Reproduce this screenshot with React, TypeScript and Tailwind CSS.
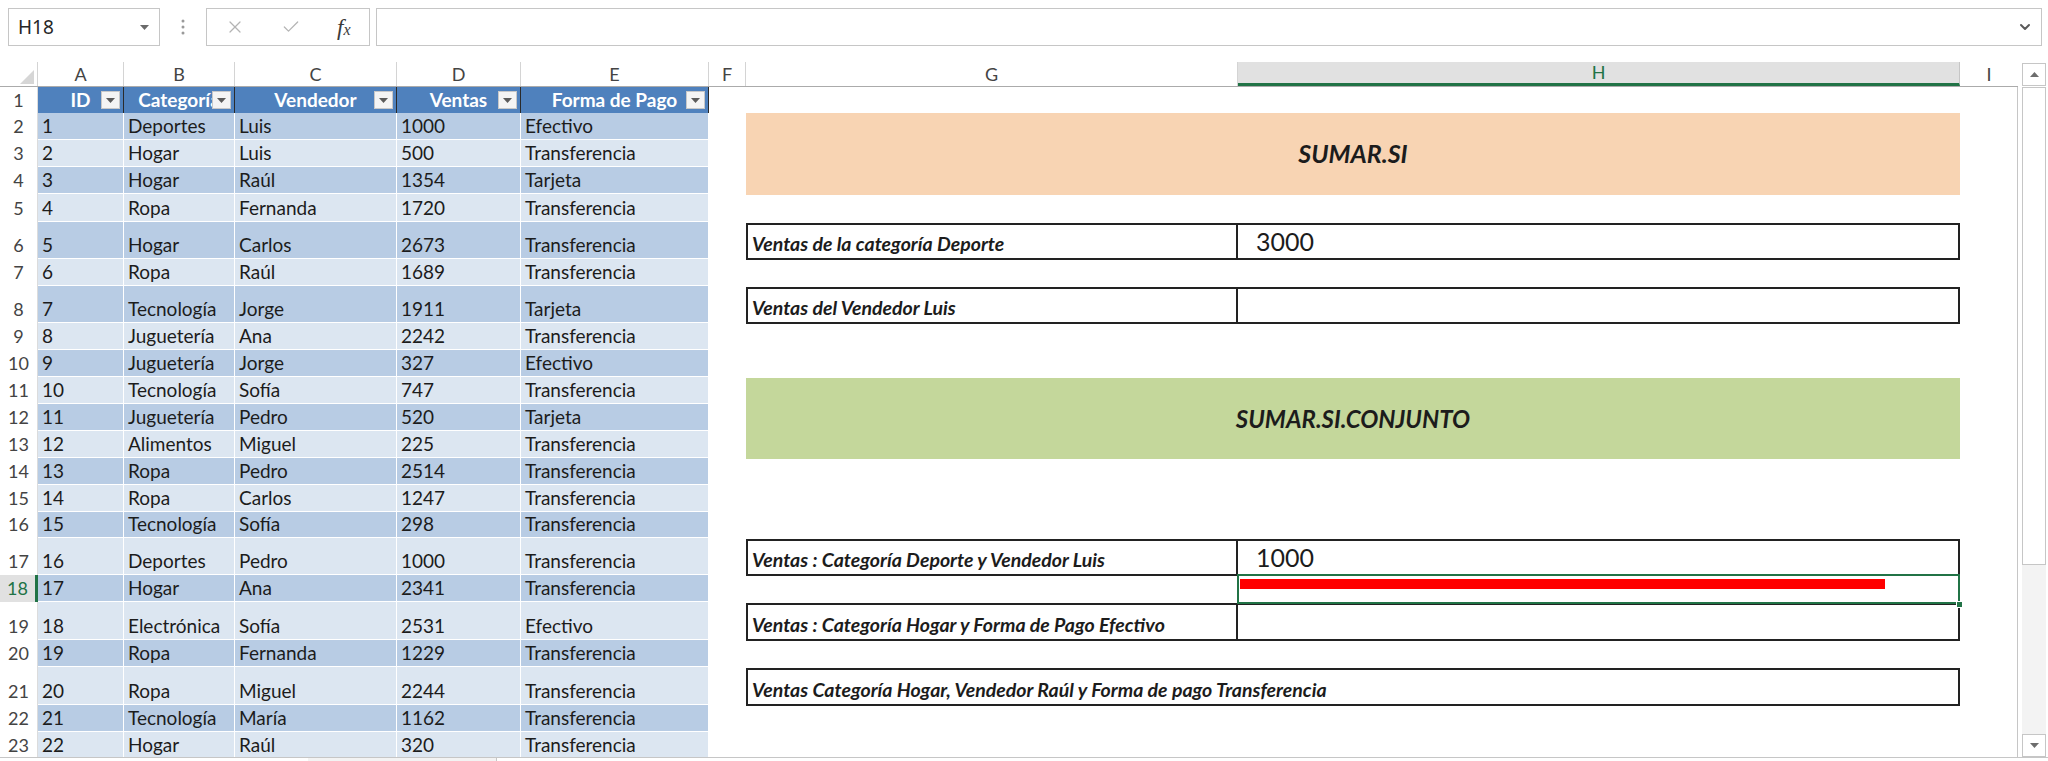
import { Check, ChevronDown, X } from "lucide-react";

type Venta = { id: number; cat: string; vend: string; monto: number; pago: string; alto: string };

const ventas: Venta[] = [
  { id: 1, cat: "Deportes", vend: "Luis", monto: 1000, pago: "Efectivo", alto: "h-[27px]" },
  { id: 2, cat: "Hogar", vend: "Luis", monto: 500, pago: "Transferencia", alto: "h-[27px]" },
  { id: 3, cat: "Hogar", vend: "Raúl", monto: 1354, pago: "Tarjeta", alto: "h-[27px]" },
  { id: 4, cat: "Ropa", vend: "Fernanda", monto: 1720, pago: "Transferencia", alto: "h-[28px]" },
  { id: 5, cat: "Hogar", vend: "Carlos", monto: 2673, pago: "Transferencia", alto: "h-[37px]" },
  { id: 6, cat: "Ropa", vend: "Raúl", monto: 1689, pago: "Transferencia", alto: "h-[27px]" },
  { id: 7, cat: "Tecnología", vend: "Jorge", monto: 1911, pago: "Tarjeta", alto: "h-[37px]" },
  { id: 8, cat: "Juguetería", vend: "Ana", monto: 2242, pago: "Transferencia", alto: "h-[27px]" },
  { id: 9, cat: "Juguetería", vend: "Jorge", monto: 327, pago: "Efectivo", alto: "h-[27px]" },
  { id: 10, cat: "Tecnología", vend: "Sofía", monto: 747, pago: "Transferencia", alto: "h-[27px]" },
  { id: 11, cat: "Juguetería", vend: "Pedro", monto: 520, pago: "Tarjeta", alto: "h-[27px]" },
  { id: 12, cat: "Alimentos", vend: "Miguel", monto: 225, pago: "Transferencia", alto: "h-[27px]" },
  { id: 13, cat: "Ropa", vend: "Pedro", monto: 2514, pago: "Transferencia", alto: "h-[27px]" },
  { id: 14, cat: "Ropa", vend: "Carlos", monto: 1247, pago: "Transferencia", alto: "h-[27px]" },
  { id: 15, cat: "Tecnología", vend: "Sofía", monto: 298, pago: "Transferencia", alto: "h-[26px]" },
  { id: 16, cat: "Deportes", vend: "Pedro", monto: 1000, pago: "Transferencia", alto: "h-[37px]" },
  { id: 17, cat: "Hogar", vend: "Ana", monto: 2341, pago: "Transferencia", alto: "h-[27px]" },
  { id: 18, cat: "Electrónica", vend: "Sofía", monto: 2531, pago: "Efectivo", alto: "h-[38px]" },
  { id: 19, cat: "Ropa", vend: "Fernanda", monto: 1229, pago: "Transferencia", alto: "h-[27px]" },
  { id: 20, cat: "Ropa", vend: "Miguel", monto: 2244, pago: "Transferencia", alto: "h-[38px]" },
  { id: 21, cat: "Tecnología", vend: "María", monto: 1162, pago: "Transferencia", alto: "h-[27px]" },
  { id: 22, cat: "Hogar", vend: "Raúl", monto: 320, pago: "Transferencia", alto: "h-[27px]" },
];

const columnas = [
  { letra: "A", ancho: "w-[86px]", titulo: "ID" },
  { letra: "B", ancho: "w-[111px]", titulo: "Categoría" },
  { letra: "C", ancho: "w-[162px]", titulo: "Vendedor" },
  { letra: "D", ancho: "w-[124px]", titulo: "Ventas" },
  { letra: "E", ancho: "w-[188px]", titulo: "Forma de Pago" },
];

function Triangulo({ className = "" }: { className?: string }) {
  return (
    <svg width="9" height="5" viewBox="0 0 9 5" className={className}>
      <polygon points="0,0 9,0 4.5,5" fill="currentColor" />
    </svg>
  );
}

function BarraFormulas() {
  return (
    <div className="h-[62px] flex items-start pt-[8px] pl-[8px] pr-[6px] font-['Noto_Sans',sans-serif]">
      <div className="w-[152px] h-[38px] border border-[#c6c6c6] flex items-center justify-between pl-[9px] pr-[10px]">
        <span className="text-[19px] text-[#262626]">H18</span>
        <Triangulo className="text-[#6a6a6a]" />
      </div>
      <div className="w-[46px] h-[38px] flex items-center justify-center">
        <svg width="4" height="16" viewBox="0 0 4 16">
          <circle cx="2" cy="2" r="1.5" fill="#9a9a9a" />
          <circle cx="2" cy="8" r="1.5" fill="#9a9a9a" />
          <circle cx="2" cy="14" r="1.5" fill="#9a9a9a" />
        </svg>
      </div>
      <div className="w-[164px] h-[38px] border border-[#c6c6c6] flex items-center pl-[18px] gap-[36px]">
        <X size={20} strokeWidth={1.5} className="text-[#b4b4b4]" />
        <Check size={20} strokeWidth={1.5} className="text-[#b4b4b4]" />
        <span className="font-['Liberation_Serif',serif] italic text-[23px] text-[#3a3a3a] leading-none">
          f<span className="text-[16px]">x</span>
        </span>
      </div>
      <div className="ml-[6px] flex-1 h-[38px] border border-[#c6c6c6] flex items-center justify-end pr-[8px]">
        <ChevronDown size={16} strokeWidth={3} className="text-[#5a5a5a]" />
      </div>
    </div>
  );
}

function EncabezadoColumnas() {
  const resto = [
    { letra: "F", ancho: "w-[37px]" },
    { letra: "G", ancho: "w-[492px]" },
  ];
  return (
    <div className="h-[25px] flex text-[18px] text-[#444] border-b border-[#ababab]">
      <div className="w-[38px] border-r border-[#d4d4d4] relative">
        <svg width="14" height="14" viewBox="0 0 14 14" className="absolute right-[3px] bottom-[2px]">
          <polygon points="14,0 14,14 0,14" fill="#d6d6d6" />
        </svg>
      </div>
      {[...columnas, ...resto].map((c) => (
        <div key={c.letra} className={`${c.ancho} border-r border-[#d4d4d4] flex items-center justify-center`}>
          {c.letra}
        </div>
      ))}
      <div className="w-[722px] bg-[#e1e1e1] text-[#217346] border-r border-[#c6c6c6] border-b-[3px] border-b-[#217346] flex items-center justify-center">
        H
      </div>
      <div className="flex-1 flex items-center justify-center">I</div>
    </div>
  );
}

function FilaEncabezadoTabla() {
  return (
    <div className="h-[26px] flex">
      <div className="w-[38px] border-r border-[#dcdcdc] flex items-end justify-center pb-[4px] text-[18px] leading-none text-[#444]">
        1
      </div>
      {columnas.map((c) => (
        <div
          key={c.letra}
          className={`${c.ancho} relative bg-[#4f81bd] border-r border-[#2a2a2a] flex items-end justify-center pb-[4px] overflow-hidden`}
        >
          <span className="text-[19px] leading-none font-bold text-white whitespace-nowrap">{c.titulo}</span>
          <div className="absolute right-[3px] top-[4px] w-[19px] h-[18px] bg-[#f4f4f4] border border-[#c8c8c8] flex items-center justify-center text-[#5b5b5b]">
            <Triangulo />
          </div>
        </div>
      ))}
    </div>
  );
}

function FilaDatos({ v, fila }: { v: Venta; fila: number }) {
  const fondo = v.id % 2 === 1 ? "bg-[#b8cce4]" : "bg-[#dce6f1]";
  const activa = fila === 18;
  const celdas = [String(v.id), v.cat, v.vend, String(v.monto), v.pago];
  return (
    <div className={`${v.alto} flex`}>
      <div
        className={`w-[38px] flex items-end justify-center pb-[5px] text-[18px] leading-none ${
          activa ? "bg-[#e1e1e1] text-[#217346] border-r-[3px] border-[#217346]" : "text-[#444] border-r border-[#dcdcdc]"
        }`}
      >
        {fila}
      </div>
      {columnas.map((c, i) => (
        <div
          key={c.letra}
          className={`${c.ancho} ${fondo} border-r border-b border-white flex items-end pl-[4px] pb-[4px] text-[19px] leading-none text-[#1c1c1c] overflow-hidden whitespace-nowrap`}
        >
          {celdas[i]}
        </div>
      ))}
    </div>
  );
}

function Caja({ texto, valor, alto }: { texto: string; valor?: string; alto: string }) {
  return (
    <div className={`${alto} flex border-2 border-[#222]`}>
      <div className="w-[490px] border-r-2 border-[#222] flex items-end pl-[4px] pb-[5px] text-[19.5px] leading-none font-bold italic whitespace-nowrap">
        {texto}
      </div>
      <div className="flex-1 flex items-end pl-[18px] pb-[4px] text-[25px] leading-none">{valor}</div>
    </div>
  );
}

function PanelFunciones() {
  return (
    <div className="w-[1214px] flex flex-col">
      <div className="h-[26px]" />
      <div className="h-[82px] bg-[#f8d4b3] flex items-center justify-center text-[25px] font-bold italic">
        SUMAR.SI
      </div>
      <div className="h-[28px]" />
      <Caja alto="h-[37px]" texto="Ventas de la categoría Deporte" valor="3000" />
      <div className="h-[27px]" />
      <Caja alto="h-[37px]" texto="Ventas del Vendedor Luis" />
      <div className="h-[54px]" />
      <div className="h-[81px] bg-[#c4d79b] flex items-center justify-center text-[24px] font-bold italic">
        SUMAR.SI.CONJUNTO
      </div>
      <div className="h-[80px]" />
      <Caja alto="h-[37px]" texto="Ventas : Categoría Deporte y Vendedor Luis" valor="1000" />
      {/* fila 18: celda activa H18 */}
      <div className="h-[27px] flex">
        <div className="w-[492px]" />
        <div className="flex-1 relative border-r-2 border-[#222]">
          <div className="absolute -left-[1px] -top-[2px] -right-[2px] -bottom-[1px] border-2 border-[#217346]" />
          <div className="absolute -right-[5px] -bottom-[5px] w-[7px] h-[7px] bg-[#217346] border border-white" />
          <div className="mt-[3px] ml-[2px] w-[645px] h-[10px] bg-[#ff0000]" />
        </div>
      </div>
      <Caja alto="h-[38px]" texto="Ventas : Categoría Hogar y Forma de Pago Efectivo" />
      <div className="h-[27px]" />
      <div className="h-[38px] border-2 border-[#222] flex items-end pl-[4px] pb-[5px] text-[19.5px] leading-none font-bold italic">
        Ventas Categoría Hogar, Vendedor Raúl y Forma de pago Transferencia
      </div>
    </div>
  );
}

function Hoja() {
  return (
    <div className="w-[2018px] flex flex-col">
      <EncabezadoColumnas />
      <div className="flex flex-1 border-r border-[#c6c6c6]">
        <div className="w-[709px] flex flex-col">
          <FilaEncabezadoTabla />
          {ventas.map((v, i) => (
            <FilaDatos key={v.id} v={v} fila={i + 2} />
          ))}
        </div>
        <div className="w-[37px]" />
        <PanelFunciones />
      </div>
    </div>
  );
}

function BarraDesplazamiento() {
  return (
    <div className="w-[30px] flex flex-col pl-[4px] pr-[2px] pt-[1px]">
      <div className="h-[23px] border border-[#c6c6c6] flex items-center justify-center text-[#6d6d6d]">
        <Triangulo className="rotate-180" />
      </div>
      <div className="mt-[1px] h-[478px] border border-[#c6c6c6] bg-white" />
      <div className="flex-1 bg-[#f3f3f3]" />
      <div className="h-[23px] border border-[#c6c6c6] flex items-center justify-center text-[#6d6d6d]">
        <Triangulo />
      </div>
    </div>
  );
}

export default function App() {
  return (
    <div className="w-[2048px] h-[761px] bg-white overflow-hidden flex flex-col font-['Lato',sans-serif] text-[#1c1c1c]">
      <BarraFormulas />
      <div className="h-[695px] flex overflow-hidden">
        <Hoja />
        <BarraDesplazamiento />
      </div>
      <div className="h-[4px] flex border-t border-[#c6c6c6] bg-[#f3f3f3]">
        <div className="w-[308px] bg-white" />
        <div className="w-[188px]" />
        <div className="flex-1 bg-white border-l border-[#c6c6c6]" />
      </div>
    </div>
  );
}
